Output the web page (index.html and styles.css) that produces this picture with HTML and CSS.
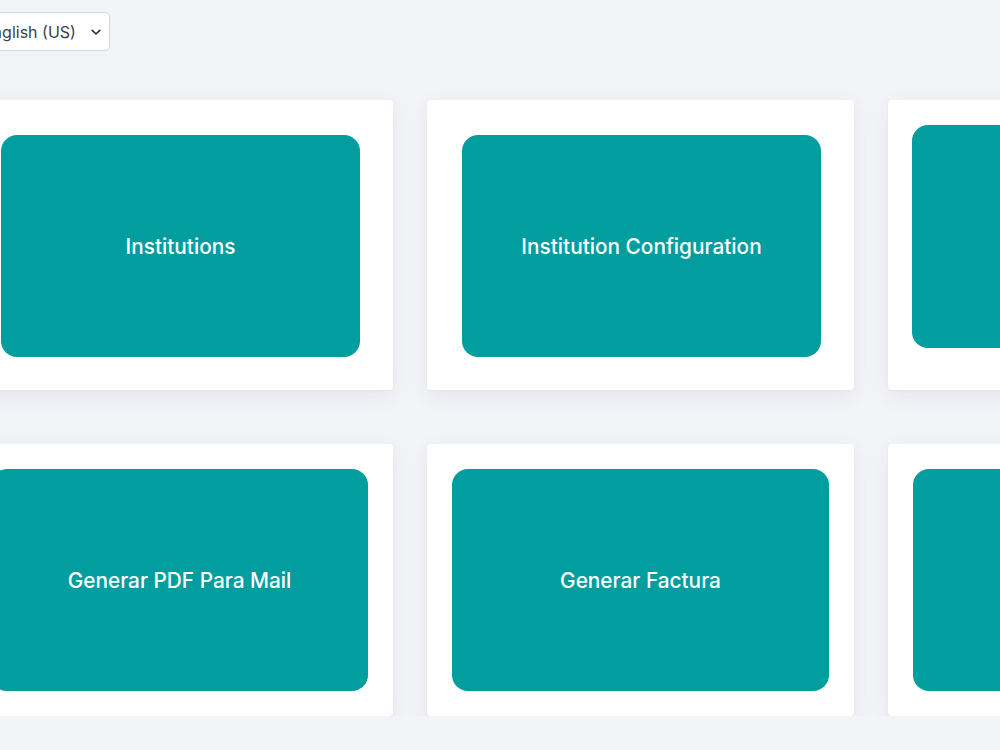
FILE: index.html
```html
<!DOCTYPE html>
<html lang="en">
<head>
<meta charset="utf-8">
<title>Dashboard</title>
<link rel="stylesheet" href="styles.css">
</head>
<body>
<div class="page">
  <div class="topbar">
    <div class="lang-select">
      <span class="lang-text">English (US)</span>
      <svg class="chev" width="10" height="7" viewBox="0 0 10 7"><path d="M1.2 1.3 L5 5 L8.8 1.3" fill="none" stroke="#333" stroke-width="1.7" stroke-linecap="round" stroke-linejoin="round"/></svg>
    </div>
  </div>
  <div class="grid">
    <div class="card card-center"><div class="tile tile-sm">Institutions</div></div>
    <div class="card card-center"><div class="tile tile-sm">Institution Configuration</div></div>
    <div class="card card-top"><div class="tile tile-lg">Usuarios</div></div>
    <div class="card card-pad"><div class="tile tile-full">Generar PDF Para Mail</div></div>
    <div class="card card-pad"><div class="tile tile-full">Generar Factura</div></div>
    <div class="card card-pad"><div class="tile tile-full">Reportes</div></div>
  </div>
</div>
</body>
</html>
```
FILE: styles.css
```css
html, body {
  margin: 0;
  padding: 0;
  background: #f3f4f8;
  overflow: hidden;
  font-family: "Inter", "Noto Sans", sans-serif;
}
.page {
  width: 1350px;
  margin-left: -34px;
}
.topbar {
  padding-top: 12px;
  height: 39px;
}
.lang-select {
  margin-left: 10px;
  width: 134px;
  height: 39px;
  box-sizing: border-box;
  border: 1px solid #d3d7dc;
  border-radius: 5px;
  background: #fff;
  display: flex;
  align-items: center;
  justify-content: space-between;
  padding: 0 8px 0 6px;
  color: #3d4146;
  font-size: 16px;
  font-weight: 400;
}
.chev { margin-top: 1px; }
.grid {
  margin-top: 49px;
  display: grid;
  grid-template-columns: 427px 427px 427px;
  grid-template-rows: 290px 272px;
  column-gap: 34px;
  row-gap: 54px;
}
.card {
  background: #fff;
  border-radius: 4px;
  box-shadow: 0 6px 22px rgba(40, 50, 80, 0.07), 0 1px 3px rgba(40, 50, 80, 0.04);
  display: flex;
  box-sizing: border-box;
}
.card-center {
  padding: 35px 33px 33px 35px;
}
.card-top {
  padding: 25px 24px;
  align-items: flex-start;
}
.card-pad {
  padding: 25px;
}
.tile {
  background: #029e9f;
  color: #fff;
  border-radius: 16px;
  display: flex;
  align-items: center;
  justify-content: center;
  font-size: 20.8px;
  font-weight: 500;
  letter-spacing: 0;
}
.tile-sm {
  width: 360px;
  height: 222px;
}
.tile-lg {
  width: 379px;
  height: 223px;
}
.tile-full {
  flex: 1;
  height: 222px;
}
```
